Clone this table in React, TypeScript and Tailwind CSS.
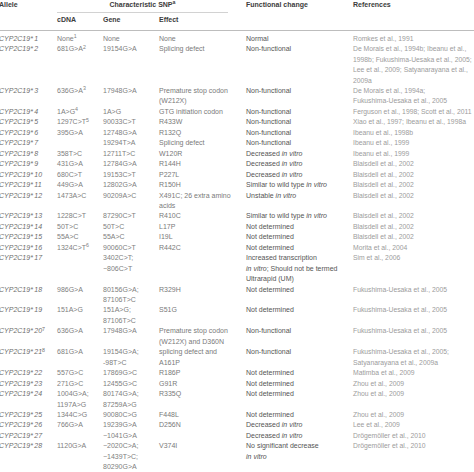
import type { ReactNode } from "react";

type Row = {
  a: string;
  n?: string;
  c?: ReactNode;
  g?: ReactNode;
  e?: ReactNode;
  f: ReactNode;
  r: ReactNode;
};

const iv = <i>in vitro</i>;
const dec = <>Decreased {iv}</>;
const nd = "Not determined";
const nf = "Non-functional";
const bl = "Blaisdell et al., 2002";
const fu = "Fukushima-Uesaka et al., 2005";

const rows: Row[] = [
  { a: "1", c: <>None<sup>1</sup></>, g: "None", e: "None", f: "Normal", r: "Romkes et al., 1991" },
  {
    a: "2",
    c: <>681G&gt;A<sup>2</sup></>,
    g: "19154G>A",
    e: "Splicing defect",
    f: nf,
    r: (
      <>
        De Morais et al., 1994b; Ibeanu et al.,
        <br />
        1998b; Fukushima-Uesaka et al., 2005;
        <br />
        Lee et al., 2009; Satyanarayana et al.,
        <br />
        2009a
      </>
    ),
  },
  {
    a: "3",
    c: <>636G&gt;A<sup>3</sup></>,
    g: "17948G>A",
    e: <>Premature stop codon<br />(W212X)</>,
    f: nf,
    r: <>De Morais et al., 1994a;<br />{fu}</>,
  },
  { a: "4", c: <>1A&gt;G<sup>4</sup></>, g: "1A>G", e: "GTG initiation codon", f: nf, r: "Ferguson et al., 1998; Scott et al., 2011" },
  { a: "5", c: <>1297C&gt;T<sup>5</sup></>, g: "90033C>T", e: "R433W", f: nf, r: "Xiao et al., 1997; Ibeanu et al., 1998a" },
  { a: "6", c: "395G>A", g: "12748G>A", e: "R132Q", f: nf, r: "Ibeanu et al., 1998b" },
  { a: "7", g: "19294T>A", e: "Splicing defect", f: nf, r: "Ibeanu et al., 1999" },
  { a: "8", c: "358T>C", g: "12711T>C", e: "W120R", f: dec, r: "Ibeanu et al., 1999" },
  { a: "9", c: "431G>A", g: "12784G>A", e: "R144H", f: dec, r: bl },
  { a: "10", c: "680C>T", g: "19153C>T", e: "P227L", f: dec, r: bl },
  { a: "11", c: "449G>A", g: "12802G>A", e: "R150H", f: <>Similar to wild type {iv}</>, r: bl },
  {
    a: "12",
    c: "1473A>C",
    g: "90209A>C",
    e: <>X491C; 26 extra amino<br />acids</>,
    f: <>Unstable {iv}</>,
    r: bl,
  },
  { a: "13", c: "1228C>T", g: "87290C>T", e: "R410C", f: <>Similar to wild type {iv}</>, r: bl },
  { a: "14", c: "50T>C", g: "50T>C", e: "L17P", f: nd, r: bl },
  { a: "15", c: "55A>C", g: "55A>C", e: "I19L", f: nd, r: bl },
  { a: "16", c: <>1324C&gt;T<sup>6</sup></>, g: "90060C>T", e: "R442C", f: nd, r: "Morita et al., 2004" },
  {
    a: "17",
    g: <>3402C&gt;T;<br />−806C&gt;T</>,
    f: (
      <>
        Increased transcription
        <br />
        {iv}; Should not be termed
        <br />
        Ultrarapid (UM)
      </>
    ),
    r: "Sim et al., 2006",
  },
  { a: "18", c: "986G>A", g: <>80156G&gt;A;<br />87106T&gt;C</>, e: "R329H", f: nd, r: fu },
  { a: "19", c: "151A>G", g: <>151A&gt;G;<br />87106T&gt;C</>, e: "S51G", f: nd, r: fu },
  {
    a: "20",
    n: "7",
    c: "636G>A",
    g: "17948G>A",
    e: <>Premature stop codon<br />(W212X) and D360N</>,
    f: nf,
    r: fu,
  },
  {
    a: "21",
    n: "8",
    c: "681G>A",
    g: <>19154G&gt;A;<br />-98T&gt;C</>,
    e: <>splicing defect and<br />A161P</>,
    f: nf,
    r: <>Fukushima-Uesaka et al., 2005;<br />Satyanarayana et al., 2009a</>,
  },
  { a: "22", c: "557G>C", g: "17869G>C", e: "R186P", f: nd, r: "Matimba et al., 2009" },
  { a: "23", c: "271G>C", g: "12455G>C", e: "G91R", f: nd, r: "Zhou et al., 2009" },
  {
    a: "24",
    c: <>1004G&gt;A;<br />1197A&gt;G</>,
    g: <>80174G&gt;A;<br />87259A&gt;G</>,
    e: "R335Q",
    f: nd,
    r: "Zhou et al., 2009",
  },
  { a: "25", c: "1344C>G", g: "90080C>G", e: "F448L", f: nd, r: "Zhou et al., 2009" },
  { a: "26", c: "766G>A", g: "19239G>A", e: "D256N", f: dec, r: "Lee et al., 2009" },
  { a: "27", g: "−1041G>A", f: dec, r: "Drögemöller et al., 2010" },
  {
    a: "28",
    c: "1120G>A",
    g: <>−2020C&gt;A;<br />−1439T&gt;C;<br />80290G&gt;A</>,
    e: "V374I",
    f: <>No significant decrease<br />{iv}</>,
    r: "Drögemöller et al., 2010",
  },
];

export default function App() {
  const th = "p-0 text-left align-top font-bold text-[#3c3c3c]";
  return (
    <div className="w-[474px] h-[472px] overflow-hidden bg-white font-['Liberation_Sans',Arial,sans-serif]">
      <table className="-ml-px w-[476px] table-fixed border-collapse text-[7px] leading-[10.45px]">
        <colgroup>
          <col className="w-[58px]" />
          <col className="w-[46px]" />
          <col className="w-[56px]" />
          <col className="w-[87px]" />
          <col className="w-[107px]" />
          <col className="w-[122px]" />
        </colgroup>
        <thead>
          <tr>
            <th rowSpan={2} className={`${th} border-b border-[#bdbdbd]`}>
              Allele
            </th>
            <th colSpan={3} className={th}>
              <div className="w-[171px] border-b border-[#d2d2d2] pb-[1.5px] text-center">
                Characteristic SNP<sup>a</sup>
              </div>
            </th>
            <th rowSpan={2} className={`${th} border-b border-[#bdbdbd]`}>
              Functional change
            </th>
            <th rowSpan={2} className={`${th} border-b border-[#bdbdbd]`}>
              References
            </th>
          </tr>
          <tr>
            <th className={`${th} border-b border-[#bdbdbd] pt-[2px] pb-[5px]`}>cDNA</th>
            <th className={`${th} border-b border-[#bdbdbd] pt-[2px] pb-[5px]`}>Gene</th>
            <th className={`${th} border-b border-[#bdbdbd] pt-[2px] pb-[5px]`}>Effect</th>
          </tr>
        </thead>
        <tbody>
          {rows.map((row, i) => {
            const pad = i === 0 ? "pt-[2.3px]" : "";
            const td = `p-0 align-top whitespace-nowrap ${pad}`;
            return (
              <tr key={row.a}>
                <td className={`${td} italic text-[#6e6e6e]`}>
                  CYP2C19*{"\u2009"}
                  {row.a}
                  {row.n && <sup className="not-italic">{row.n}</sup>}
                </td>
                <td className={`${td} text-[#808080]`}>{row.c}</td>
                <td className={`${td} text-[#808080]`}>{row.g}</td>
                <td className={`${td} text-[#7a7a7a]`}>{row.e}</td>
                <td className={`${td} text-[#555555]`}>{row.f}</td>
                <td className={`${td} text-[6.8px] text-[#9c9c9c]`}>{row.r}</td>
              </tr>
            );
          })}
        </tbody>
      </table>
    </div>
  );
}
